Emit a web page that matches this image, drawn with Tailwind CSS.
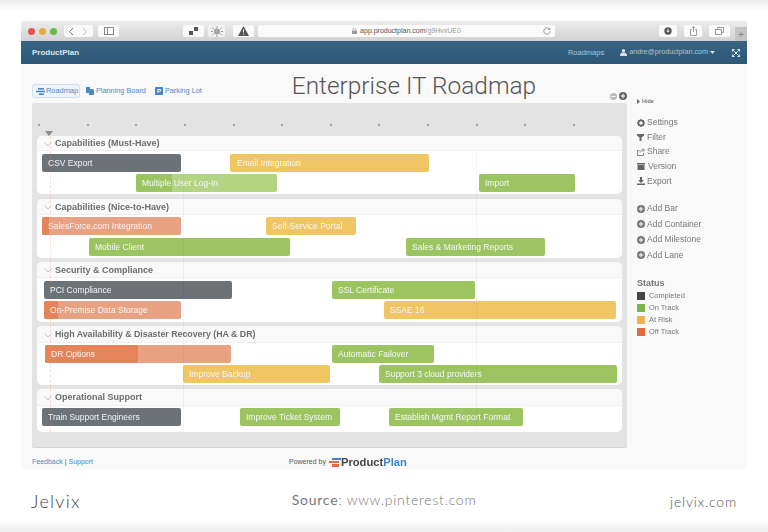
<!DOCTYPE html>
<html lang="en">
<head>
  <meta charset="UTF-8">
  <title>Enterprise IT Roadmap</title>
  <script src="https://cdn.jsdelivr.net/npm/@tailwindcss/browser@4"></script>
</head>
<body class="bg-white font-['Liberation_Sans',Arial,sans-serif] w-[768px] h-[532px] overflow-hidden relative">

  <!-- top shadow -->
  <div class="h-[21px] bg-gradient-to-b from-[#ececec] via-white to-white"></div>

  <!-- browser window -->
  <div class="ml-[21px] w-[726px] h-[448px] flex flex-col blur-[0.45px]">

    <!-- chrome -->
    <div class="h-[20px] bg-gradient-to-b from-[#ececec] to-[#d2d2d2] flex items-center relative">
      <span class="ml-[7px] w-[7px] h-[7px] rounded-full bg-[#e2574c]"></span>
      <span class="ml-[4px] w-[7px] h-[7px] rounded-full bg-[#e6a93c]"></span>
      <span class="ml-[4px] w-[7px] h-[7px] rounded-full bg-[#6cb94b]"></span>
      <div class="ml-[7px] w-[29px] h-[12px] bg-[#fafafa] rounded-[2px] flex items-center text-[#888]">
        <svg class="ml-[4px]" width="6" height="9" viewBox="0 0 6 9" fill="none" stroke="#777" stroke-width="1"><path d="M5 1 1.5 4.5 5 8"/></svg>
        <svg class="ml-[8px]" width="6" height="9" viewBox="0 0 6 9" fill="none" stroke="#bbb" stroke-width="1"><path d="M1 1l3.5 3.5L1 8"/></svg>
      </div>
      <div class="ml-[5px] w-[21px] h-[12px] bg-[#fafafa] rounded-[2px] flex items-center justify-center">
        <svg width="10" height="8" viewBox="0 0 10 8" fill="none" stroke="#888" stroke-width="1"><rect x=".5" y=".5" width="9" height="7"/><path d="M3.5 .5v7"/></svg>
      </div>
      <div class="ml-[64px] w-[21px] h-[12px] bg-[#fafafa] rounded-[2px] flex items-center justify-center">
        <svg width="9" height="8" viewBox="0 0 9 8" fill="#555"><rect x="0" y="4" width="4" height="4"/><rect x="5" y="0" width="4" height="4"/></svg>
      </div>
      <div class="ml-[4px] w-[17px] h-[12px] bg-[#f2f2f2] rounded-[2px] flex items-center justify-center">
        <svg width="12" height="11" viewBox="0 0 12 11" fill="none" stroke="#999" stroke-width="1"><circle cx="6" cy="5.5" r="2.6" fill="#aaa"/><path d="M6 0v2M6 9v2M1 1.5l2 2M11 1.5l-2 2M1 9.5l2-2M11 9.5l-2-2M0 5.5h2M10 5.5h2"/></svg>
      </div>
      <div class="ml-[8px] w-[21px] h-[12px] bg-[#fafafa] rounded-[2px] flex items-center justify-center">
        <svg width="11" height="10" viewBox="0 0 11 10"><path d="M5.5 0 11 10H0z" fill="#555"/><path d="M5.5 3.5v3M5.5 7.5v1" stroke="#fff" stroke-width="1"/></svg>
      </div>
      <div class="ml-[4px] w-[297px] h-[12px] bg-[#fafafa] rounded-[2px] relative flex items-center justify-center text-[7px] text-[#555]">
        <svg class="mr-[3px]" width="5" height="6" viewBox="0 0 5 6" fill="#999"><rect y="2.5" width="5" height="3.5"/><path d="M1 2.5V1.5a1.5 1.5 0 0 1 3 0v1" fill="none" stroke="#999" stroke-width=".7"/></svg>
        <span>app.productplan.com<span class="text-[#999]">/g9HvxUE0</span></span>
        <svg class="absolute right-[4px] top-[2px]" width="8" height="8" viewBox="0 0 8 8" fill="none" stroke="#888" stroke-width=".8"><path d="M6.6 2.2A3.2 3.2 0 1 0 7.2 4M6.8.8v1.7H5.1"/></svg>
      </div>
      <div class="ml-[104px] w-[18px] h-[12px] bg-[#fafafa] rounded-[2px] flex items-center justify-center">
        <svg width="8" height="8" viewBox="0 0 8 8"><circle cx="4" cy="4" r="3.7" fill="#555"/><path d="M4 1.7v3M2.8 3.8 4 5.2l1.2-1.4" stroke="#fff" fill="none" stroke-width=".9"/></svg>
      </div>
      <div class="ml-[7px] w-[18px] h-[12px] bg-[#fafafa] rounded-[2px] flex items-center justify-center">
        <svg width="7" height="10" viewBox="0 0 7 10" fill="none" stroke="#888" stroke-width=".8"><path d="M1.8 3.5H.5V9.5h6V3.5H5.2M3.5 6V.7M2 2 3.5.6 5 2"/></svg>
      </div>
      <div class="ml-[7px] w-[21px] h-[12px] bg-[#fafafa] rounded-[2px] flex items-center justify-center">
        <svg width="9" height="8" viewBox="0 0 9 8" fill="none" stroke="#888" stroke-width=".8"><rect x=".5" y="2.5" width="6" height="5"/><path d="M2.5 2.5v-2h6v5h-2"/></svg>
      </div>
      <div class="absolute right-0 top-[6px] bottom-0 w-[12px] bg-[#c4c4c4] text-[#888] text-[11px] leading-[15px] text-center">+</div>
    </div>

    <!-- navbar -->
    <div class="h-[23px] bg-gradient-to-b from-[#386583] to-[#2c5877] flex items-center text-[7.2px] text-[#a9c3d3]">
      <span class="ml-[11px] text-[8px] font-bold text-[#dbe6ec]">ProductPlan</span>
      <span class="ml-auto text-[7.5px]">Roadmaps</span>
      <svg class="ml-[16px] mr-[2px]" width="7" height="7" viewBox="0 0 7 7" fill="#d5e0e7"><circle cx="3.5" cy="1.7" r="1.7"/><path d="M0 7c0-3 1.5-3.6 3.5-3.6S7 4 7 7z"/></svg>
      <span>andre@productplan.com</span>
      <svg class="ml-[2px]" width="5" height="3" viewBox="0 0 5 3" fill="#d5e0e7"><path d="M0 0h5L2.5 3z"/></svg>
      <svg class="ml-[17px] mr-[7px]" width="8" height="8" viewBox="0 0 8 8" stroke="#d5e0e7" stroke-width="1" fill="#d5e0e7"><path d="M1.500 1.500l5 5M6.500 1.500l-5 5"/><path d="M0 0h3L0 3zM8 0v3L5 0zM0 8V5l3 3zM8 8H5l3-3z" stroke="none"/></svg>
    </div>

    <!-- app -->
    <div class="flex-1 bg-[#f9f9f9] flex">
      <div class="ml-[11px] w-[595px] flex flex-col">

        <!-- tabs + title -->
        <div class="h-[39px] flex items-start">
          <div class="mt-[20px] w-[48px] h-[14px] rounded-[3px] border border-[#cfe0ef] bg-[#eef4fa] flex items-center text-[7.4px] text-[#4a8ac4]">
            <svg class="ml-[3px] mr-[1px]" width="9" height="7" viewBox="0 0 9 7" fill="#4a8ac4"><rect x="2" y="0" width="6" height="1.6"/><rect x="0" y="2.7" width="9" height="1.6"/><rect x="3" y="5.4" width="5" height="1.6"/></svg>
            Roadmap
          </div>
          <div class="mt-[20px] ml-[6px] h-[14px] flex items-center text-[7.3px] text-[#4a8ac4]">
            <svg class="mr-[2px]" width="8" height="8" viewBox="0 0 8 8" fill="#4a8ac4"><path d="M0 0h4v2h3l1 1v5H3V6H0z"/></svg>
            Planning Board
          </div>
          <div class="mt-[20px] ml-[9px] h-[14px] flex items-center text-[7.3px] text-[#4a8ac4]">
            <span class="mr-[2px] w-[8px] h-[8px] rounded-[1px] bg-[#3f86cc] text-white text-[6px] font-bold leading-[8px] text-center">P</span>
            Parking Lot
          </div>
          <h1 class="ml-[90px] mt-[7px] text-[24.4px] leading-[30px] font-light font-['Roboto',sans-serif] text-[#555] whitespace-nowrap">Enterprise IT Roadmap</h1>
          <div class="ml-auto mt-[28px] flex items-center gap-[2px]">
            <svg width="7" height="7" viewBox="0 0 7 7"><circle cx="3.5" cy="3.5" r="3.5" fill="#bbb"/><path d="M1.5 3.5h4" stroke="#fff"/></svg>
            <svg width="8" height="8" viewBox="0 0 8 8"><circle cx="4" cy="4" r="4" fill="#666"/><path d="M1.700 4h4.600M4 1.700v4.600" stroke="#fff"/></svg>
          </div>
        </div>

        <!-- roadmap canvas -->
        <div class="h-[344px] bg-[#e3e3e3] rounded-[2px] px-[5px] pt-[21px] shadow-[0_1px_0_#d5d5d5]">
          <div class="h-[2px] flex justify-between pl-[1px] pr-[47px]">
            <i class="w-[2px] h-[2px] bg-[#a5a5a5]"></i><i class="w-[2px] h-[2px] bg-[#a5a5a5]"></i><i class="w-[2px] h-[2px] bg-[#a5a5a5]"></i><i class="w-[2px] h-[2px] bg-[#a5a5a5]"></i>
            <i class="w-[2px] h-[2px] bg-[#a5a5a5]"></i><i class="w-[2px] h-[2px] bg-[#a5a5a5]"></i><i class="w-[2px] h-[2px] bg-[#a5a5a5]"></i><i class="w-[2px] h-[2px] bg-[#a5a5a5]"></i>
            <i class="w-[2px] h-[2px] bg-[#a5a5a5]"></i><i class="w-[2px] h-[2px] bg-[#a5a5a5]"></i><i class="w-[2px] h-[2px] bg-[#a5a5a5]"></i><i class="w-[2px] h-[2px] bg-[#a5a5a5]"></i>
          </div>

          <div class="mt-[10px] relative flex flex-col">
            <!-- today marker -->
            <svg class="absolute left-[8px] top-[-5px] z-10" width="8" height="5" viewBox="0 0 8 5" fill="#8a8a8a"><path d="M0 0h8L4 5z"/></svg>
            <div class="absolute left-[13px] top-0 h-[296px] border-l border-dashed border-[#e5845a]/25 z-10"></div>
            <!-- grid lines -->
            <div class="absolute left-[146px] top-[16px] h-[280px] w-px bg-black/[4%] z-10"></div>
            <div class="absolute left-[439px] top-[16px] h-[280px] w-px bg-black/[4%] z-10"></div>

            <!-- lane 1 -->
            <section class="h-[58px] bg-white rounded-[5px] overflow-hidden">
              <div class="h-[15px] pt-[2px] bg-[#f9f9f9] border-b border-[#efefef] flex items-center">
                <svg class="ml-[7px]" width="8" height="5" viewBox="0 0 8 5" fill="none" stroke="#c4c4c4"><path d="M.5.5 4 4 7.500.5"/></svg>
                <h2 class="ml-[3px] text-[9px] font-bold text-[#6d6d6d]">Capabilities (Must-Have)</h2>
              </div>
              <div class="mt-[3px] h-[18px] flex text-[8.5px] leading-[18px] text-[#f4f6f6]">
                <div class="ml-[5px] w-[139px] rounded-[2px] bg-[#6b7278] pl-[6px]">CSV Export</div>
                <div class="ml-[49px] w-[199px] rounded-[2px] bg-[#f0c563] pl-[7px]">Email Integration</div>
              </div>
              <div class="mt-[2px] h-[18px] flex text-[8.5px] leading-[18px] text-[#f4f6f6]">
                <div class="ml-[99px] w-[141px] rounded-[2px] bg-[#b3d583] pl-[6px] relative overflow-hidden"><i class="absolute left-0 top-0 bottom-0 w-[36px] bg-[#9cc561]"></i><span class="relative">Multiple User Log-In</span></div>
                <div class="ml-[202px] w-[96px] rounded-[2px] bg-[#9cc561] pl-[6px]">Import</div>
              </div>
            </section>

            <!-- lane 2 -->
            <section class="mt-[5px] h-[59px] bg-white rounded-[5px] overflow-hidden">
              <div class="h-[16px] pt-[2px] bg-[#f9f9f9] border-b border-[#efefef] flex items-center">
                <svg class="ml-[7px]" width="8" height="5" viewBox="0 0 8 5" fill="none" stroke="#c4c4c4"><path d="M.5.5 4 4 7.500.5"/></svg>
                <h2 class="ml-[3px] text-[9px] font-bold text-[#6d6d6d]">Capabilities (Nice-to-Have)</h2>
              </div>
              <div class="mt-[2px] h-[18px] flex text-[8.5px] leading-[18px] text-[#f4f6f6]">
                <div class="ml-[5px] w-[139px] rounded-[2px] bg-[#e9a183] pl-[6px] relative overflow-hidden"><i class="absolute left-0 top-0 bottom-0 w-[7px] bg-[#e5845a]"></i><span class="relative">SalesForce.com Integration</span></div>
                <div class="ml-[85px] w-[90px] rounded-[2px] bg-[#f0c563] pl-[6px]">Self-Service Portal</div>
              </div>
              <div class="mt-[3px] h-[18px] flex text-[8.5px] leading-[18px] text-[#f4f6f6]">
                <div class="ml-[52px] w-[201px] rounded-[2px] bg-[#9cc561] pl-[6px]">Mobile Client</div>
                <div class="ml-[116px] w-[139px] rounded-[2px] bg-[#9cc561] pl-[6px]">Sales &amp; Marketing Reports</div>
              </div>
            </section>

            <!-- lane 3 -->
            <section class="mt-[4px] h-[60px] bg-white rounded-[5px] overflow-hidden">
              <div class="h-[16px] pt-[2px] bg-[#f9f9f9] border-b border-[#efefef] flex items-center">
                <svg class="ml-[7px]" width="8" height="5" viewBox="0 0 8 5" fill="none" stroke="#c4c4c4"><path d="M.5.5 4 4 7.500.5"/></svg>
                <h2 class="ml-[3px] text-[9px] font-bold text-[#6d6d6d]">Security &amp; Compliance</h2>
              </div>
              <div class="mt-[3px] h-[18px] flex text-[8.5px] leading-[18px] text-[#f4f6f6]">
                <div class="ml-[7px] w-[188px] rounded-[2px] bg-[#6b7278] pl-[6px]">PCI Compliance</div>
                <div class="ml-[100px] w-[143px] rounded-[2px] bg-[#9cc561] pl-[6px]">SSL Certificate</div>
              </div>
              <div class="mt-[2px] h-[18px] flex text-[8.5px] leading-[18px] text-[#f4f6f6]">
                <div class="ml-[7px] w-[137px] rounded-[2px] bg-[#e9a183] pl-[6px] relative overflow-hidden"><i class="absolute left-0 top-0 bottom-0 w-[14px] bg-[#e5845a]"></i><span class="relative">On-Premise Data Storage</span></div>
                <div class="ml-[203px] w-[232px] rounded-[2px] bg-[#f0c563] pl-[6px]">SSAE 16</div>
              </div>
            </section>

            <!-- lane 4 -->
            <section class="mt-[4px] h-[59px] bg-white rounded-[5px] overflow-hidden">
              <div class="h-[17px] pt-[2px] bg-[#f9f9f9] border-b border-[#efefef] flex items-center">
                <svg class="ml-[7px]" width="8" height="5" viewBox="0 0 8 5" fill="none" stroke="#c4c4c4"><path d="M.5.5 4 4 7.500.5"/></svg>
                <h2 class="ml-[3px] text-[8.8px] font-bold text-[#6d6d6d]">High Availability &amp; Disaster Recovery (HA &amp; DR)</h2>
              </div>
              <div class="mt-[2px] h-[18px] flex text-[8.5px] leading-[18px] text-[#f4f6f6]">
                <div class="ml-[8px] w-[186px] rounded-[2px] bg-[#e9a183] pl-[6px] relative overflow-hidden"><i class="absolute left-0 top-0 bottom-0 w-[93px] bg-[#e5845a]"></i><span class="relative">DR Options</span></div>
                <div class="ml-[101px] w-[102px] rounded-[2px] bg-[#9cc561] pl-[6px]">Automatic Failover</div>
              </div>
              <div class="mt-[2px] h-[18px] flex text-[8.5px] leading-[18px] text-[#f4f6f6]">
                <div class="ml-[146px] w-[147px] rounded-[2px] bg-[#f0c563] pl-[6px]">Improve Backup</div>
                <div class="ml-[49px] w-[238px] rounded-[2px] bg-[#9cc561] pl-[6px]">Support 3 cloud providers</div>
              </div>
            </section>

            <!-- lane 5 -->
            <section class="mt-[4px] h-[43px] bg-white rounded-[5px] overflow-hidden">
              <div class="h-[17px] pt-[2px] bg-[#f9f9f9] border-b border-[#efefef] flex items-center">
                <svg class="ml-[7px]" width="8" height="5" viewBox="0 0 8 5" fill="none" stroke="#c4c4c4"><path d="M.5.5 4 4 7.500.5"/></svg>
                <h2 class="ml-[3px] text-[9px] font-bold text-[#6d6d6d]">Operational Support</h2>
              </div>
              <div class="mt-[2px] h-[18px] flex text-[8.5px] leading-[18px] text-[#f4f6f6]">
                <div class="ml-[5px] w-[139px] rounded-[2px] bg-[#6b7278] pl-[6px]">Train Support Engineers</div>
                <div class="ml-[59px] w-[100px] rounded-[2px] bg-[#9cc561] pl-[6px]">Improve Ticket System</div>
                <div class="ml-[49px] w-[134px] rounded-[2px] bg-[#9cc561] pl-[6px]">Establish Mgmt Report Format</div>
              </div>
            </section>
          </div>
        </div>

        <!-- footer -->
        <div class="mt-[9px] h-[12px] flex items-center">
          <span class="text-[7px] text-[#4a8ac4]">Feedback <span class="text-[#555]">|</span> Support</span>
          <span class="ml-[196px] text-[7px] text-[#555]">Powered by</span>
          <svg class="ml-[3px]" width="12" height="9" viewBox="0 0 12 9"><rect x="3" y="0" width="9" height="2" fill="#3f86cc"/><rect x="0" y="3" width="10" height="2" fill="#e5683f"/><rect x="3" y="6" width="7" height="3" fill="#e5683f"/></svg>
          <span class="text-[11.2px] font-bold text-[#444]">Product<span class="text-[#3f86cc]">Plan</span></span>
        </div>
      </div>

      <!-- sidebar -->
      <aside class="ml-[10px] flex-1 text-[8.5px] text-[#777]">
        <div class="mt-[33px] h-[8px] flex items-center text-[5.5px] font-bold text-[#777]">
          <svg class="mr-[2px]" width="3" height="5" viewBox="0 0 3 5" fill="#666"><path d="M0 0l3 2.500L0 5z"/></svg>Hide
        </div>
        <div class="mt-[10px] flex flex-col">
          <div class="h-[15px] flex items-center gap-[2px]">
            <svg width="8" height="8" viewBox="0 0 8 8"><circle cx="4" cy="4" r="2.700" fill="none" stroke="#666" stroke-width="1.800"/><path d="M4 0v8M0 4h8M1.200 1.200l5.600 5.600M6.800 1.200 1.200 6.800" stroke="#666" stroke-width="1" stroke-dasharray="1.200 5.600"/></svg>Settings
          </div>
          <div class="h-[14.500px] flex items-center gap-[3px]">
            <svg width="7" height="7" viewBox="0 0 7 7" fill="#666"><path d="M0 0h7v1.500L4.500 3.500V7h-2V3.500L0 1.500z"/></svg>Filter
          </div>
          <div class="h-[14.500px] flex items-center gap-[2px]">
            <svg width="8" height="8" viewBox="0 0 8 8" fill="none" stroke="#777" stroke-width=".9"><path d="M6.500 5v2.500H.5v-5h2M3 4.500C3 3 4.500 2 6 2M5.500.5 7.500 2l-2 1.500"/></svg>Share
          </div>
          <div class="h-[14.500px] flex items-center gap-[3px]">
            <svg width="8" height="7" viewBox="0 0 8 7" fill="#666"><path d="M0 0h8v1.500H0zM.500 2h7v5h-7z"/></svg>Version
          </div>
          <div class="h-[15.500px] flex items-center gap-[2px]">
            <svg width="8" height="8" viewBox="0 0 8 8" fill="#666"><path d="M3 0h2v3h2L4 6 1 3h2zM0 6.500h8V8H0z"/></svg>Export
          </div>
        </div>
        <div class="mt-[12px] flex flex-col">
          <div class="h-[15.500px] flex items-center gap-[2px]"><svg width="8" height="8" viewBox="0 0 8 8"><circle cx="4" cy="4" r="4" fill="#777"/><path d="M1.700 4h4.600M4 1.700v4.600" stroke="#fff"/></svg>Add Bar</div>
          <div class="h-[15.500px] flex items-center gap-[2px]"><svg width="8" height="8" viewBox="0 0 8 8"><circle cx="4" cy="4" r="4" fill="#777"/><path d="M1.700 4h4.600M4 1.700v4.600" stroke="#fff"/></svg>Add Container</div>
          <div class="h-[15.500px] flex items-center gap-[2px]"><svg width="8" height="8" viewBox="0 0 8 8"><circle cx="4" cy="4" r="4" fill="#777"/><path d="M1.700 4h4.600M4 1.700v4.600" stroke="#fff"/></svg>Add Milestone</div>
          <div class="h-[15.500px] flex items-center gap-[2px]"><svg width="8" height="8" viewBox="0 0 8 8"><circle cx="4" cy="4" r="4" fill="#777"/><path d="M1.700 4h4.600M4 1.700v4.600" stroke="#fff"/></svg>Add Lane</div>
        </div>
        <div class="mt-[14px] text-[9px] font-bold text-[#777] leading-[12px]">Status</div>
        <div class="mt-[3px] flex flex-col gap-[4px] text-[7.4px] text-[#777]">
          <div class="h-[8px] flex items-center gap-[4px]"><i class="w-[8px] h-[8px] bg-[#42464a]"></i>Completed</div>
          <div class="h-[8px] flex items-center gap-[4px]"><i class="w-[8px] h-[8px] bg-[#7ab648]"></i>On Track</div>
          <div class="h-[8px] flex items-center gap-[4px]"><i class="w-[8px] h-[8px] bg-[#f0b44c]"></i>At Risk</div>
          <div class="h-[8px] flex items-center gap-[4px]"><i class="w-[8px] h-[8px] bg-[#e26a3f]"></i>Off Track</div>
        </div>
      </aside>
    </div>
  </div>

  <!-- jelvix caption -->
  <div class="h-[63px] flex items-start bg-gradient-to-b from-white from-80% to-[#eeeeee] font-['Lato',sans-serif]">
    <span class="ml-[31px] mt-[21px] text-[18px] leading-[22px] font-light tracking-[1.3px] text-[#444]">Jelvix</span>
    <span class="ml-[211px] mt-[22px] text-[14px] leading-[17px] font-light text-[#777] tracking-[0.75px]"><b class="font-normal">Source</b>: www.pinterest.com</span>
    <span class="ml-auto mr-[31px] mt-[24px] text-[14px] leading-[17px] font-light text-[#555] tracking-[0.8px]">jelvix.com</span>
  </div>
</body>
</html>
